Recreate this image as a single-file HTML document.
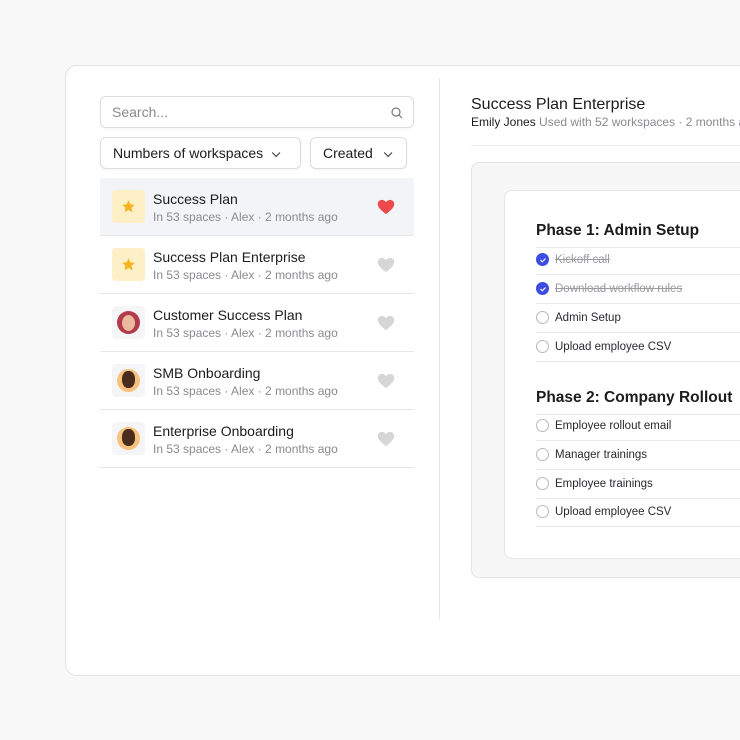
<!DOCTYPE html>
<html><head><style>
*{box-sizing:border-box;margin:0;padding:0}
body{width:740px;height:740px;overflow:hidden;background:#f8f8f9;font-family:"Liberation Sans",sans-serif;color:#1c1c1e;position:relative}
.card{position:absolute;left:65px;top:65px;width:700px;height:611px;background:#fff;border:1px solid #e3e3e6;border-radius:12px}
.abs{position:absolute}
.search{left:100px;top:96px;width:314px;height:32px;border:1px solid #dcdce0;border-radius:6px;font-size:14px;color:#8a8a90;padding:7px 11px;box-shadow:0 1px 2px rgba(0,0,0,.05)}
.dd{top:137px;height:32px;border:1px solid #dcdce0;border-radius:6px;font-size:14px;padding:7px 12px;box-shadow:0 1px 2px rgba(0,0,0,.05)}
.row{left:100px;width:314px;height:58px;border-bottom:1px solid #e6e6e9}
.row .ic{position:absolute;left:12px;top:12px;width:33px;height:33px;border-radius:4px;background:#f5f5f7}
.row .t{position:absolute;left:53px;top:13px;font-size:14px}
.row .s{position:absolute;left:53px;top:32px;font-size:12px;color:#8a8a90}
.row .h{position:absolute;right:19px;top:21px}
.av{position:absolute;left:5px;top:5px;width:23px;height:23px;border-radius:50%}
.item{left:536px;width:220px;height:29px;border-bottom:1px solid #e8e8eb;font-size:11.5px;padding-left:19px;line-height:28px;color:#2a2a2e}
.item .c{position:absolute;left:0;top:7px;width:13px;height:13px;border-radius:50%;border:1px solid #b8b8be}
.item .c.on{background:#3d4de0;border-color:#3d4de0}
.done{color:#9a9aa0;text-decoration:line-through}
.ph{left:536px;font-size:15.5px;font-weight:bold;color:#1c1c1e;width:220px;padding-bottom:7px;border-bottom:1px solid #e8e8eb}
</style></head><body>
<div class="card"></div>
<div class="abs search">Search...<svg class="abs" style="right:10px;top:10px" width="12" height="12" viewBox="0 0 12 12"><circle cx="5" cy="5" r="4" fill="none" stroke="#777" stroke-width="1.2"/><path d="M8 8l3 3" stroke="#777" stroke-width="1.2"/></svg></div>
<div class="abs dd" style="left:100px;width:201px">Numbers of workspaces <span style="display:inline-block;margin-left:4px;width:6px;height:6px;border-right:1.3px solid #333;border-bottom:1.3px solid #333;transform:rotate(45deg) translateY(-3px)"></span></div>
<div class="abs dd" style="left:310px;width:97px">Created <span style="display:inline-block;margin-left:6px;width:6px;height:6px;border-right:1.3px solid #333;border-bottom:1.3px solid #333;transform:rotate(45deg) translateY(-3px)"></span></div>

<div class="abs row" style="top:178px;background:#f3f4f8"><div class="ic" style="background:#fdefc6"><svg style="position:absolute;left:9px;top:9px" width="15" height="15" viewBox="0 0 24 24"><path d="M12 2l3 6.5 7 .8-5.2 4.8 1.5 7L12 17.5 5.7 21l1.5-7L2 9.3l7-.8z" fill="#f6b320"/></svg></div><div class="t">Success Plan</div><div class="s">In 53 spaces · Alex · 2 months ago</div><svg class="h" width="18" height="16" viewBox="0 0 24 21"><path d="M12 20C4 14 1 10 1 6.5 1 3.4 3.4 1 6.5 1 8.6 1 10.8 2.2 12 4 13.2 2.2 15.4 1 17.5 1 20.6 1 23 3.4 23 6.5 23 10 20 14 12 20z" fill="#ec4a4a"/></svg></div>
<div class="abs row" style="top:236px"><div class="ic" style="background:#fdefc6"><svg style="position:absolute;left:9px;top:9px" width="15" height="15" viewBox="0 0 24 24"><path d="M12 2l3 6.5 7 .8-5.2 4.8 1.5 7L12 17.5 5.7 21l1.5-7L2 9.3l7-.8z" fill="#f6b320"/></svg></div><div class="t">Success Plan Enterprise</div><div class="s">In 53 spaces · Alex · 2 months ago</div><svg class="h" width="18" height="16" viewBox="0 0 24 21"><path d="M12 20C4 14 1 10 1 6.5 1 3.4 3.4 1 6.5 1 8.6 1 10.8 2.2 12 4 13.2 2.2 15.4 1 17.5 1 20.6 1 23 3.4 23 6.5 23 10 20 14 12 20z" fill="#d6d6d9"/></svg></div>
<div class="abs row" style="top:294px"><div class="ic"><div class="av" style="background:#b23a4a"><div style="position:absolute;left:5px;top:4px;width:13px;height:16px;border-radius:50%;background:#e9b9a0"></div></div></div><div class="t">Customer Success Plan</div><div class="s">In 53 spaces · Alex · 2 months ago</div><svg class="h" width="18" height="16" viewBox="0 0 24 21"><path d="M12 20C4 14 1 10 1 6.5 1 3.4 3.4 1 6.5 1 8.6 1 10.8 2.2 12 4 13.2 2.2 15.4 1 17.5 1 20.6 1 23 3.4 23 6.5 23 10 20 14 12 20z" fill="#d6d6d9"/></svg></div>
<div class="abs row" style="top:352px"><div class="ic"><div class="av" style="background:#f7c27e"><div style="position:absolute;left:5px;top:2px;width:13px;height:17px;border-radius:45%;background:#4a2c1e"></div></div></div><div class="t">SMB Onboarding</div><div class="s">In 53 spaces · Alex · 2 months ago</div><svg class="h" width="18" height="16" viewBox="0 0 24 21"><path d="M12 20C4 14 1 10 1 6.5 1 3.4 3.4 1 6.5 1 8.6 1 10.8 2.2 12 4 13.2 2.2 15.4 1 17.5 1 20.6 1 23 3.4 23 6.5 23 10 20 14 12 20z" fill="#d6d6d9"/></svg></div>
<div class="abs row" style="top:410px"><div class="ic"><div class="av" style="background:#f7c27e"><div style="position:absolute;left:5px;top:2px;width:13px;height:17px;border-radius:45%;background:#4a2c1e"></div></div></div><div class="t">Enterprise Onboarding</div><div class="s">In 53 spaces · Alex · 2 months ago</div><svg class="h" width="18" height="16" viewBox="0 0 24 21"><path d="M12 20C4 14 1 10 1 6.5 1 3.4 3.4 1 6.5 1 8.6 1 10.8 2.2 12 4 13.2 2.2 15.4 1 17.5 1 20.6 1 23 3.4 23 6.5 23 10 20 14 12 20z" fill="#d6d6d9"/></svg></div>

<div class="abs" style="left:439px;top:78px;width:1px;height:542px;background:#e6e6e9"></div>

<div class="abs" style="left:471px;top:96px;font-size:16px;white-space:nowrap">Success Plan Enterprise</div>
<div class="abs" style="left:471px;top:115px;font-size:12px;white-space:nowrap">Emily Jones <span style="color:#8a8a90">Used with 52 workspaces · 2 months ago</span></div>
<div class="abs" style="left:471px;top:145px;width:280px;height:1px;background:#ececef"></div>
<div class="abs" style="left:471px;top:162px;width:290px;height:416px;background:#f7f7f8;border:1px solid #e3e3e6;border-radius:8px"></div>
<div class="abs" style="left:504px;top:190px;width:260px;height:369px;background:#fff;border:1px solid #e6e6e9;border-radius:8px"></div>

<div class="abs ph" style="top:222px">Phase 1: Admin Setup</div>
<div class="abs item" style="top:246px"><span class="c on"><svg style="position:absolute;left:2px;top:2px" width="8" height="8" viewBox="0 0 8 8"><path d="M1.5 4l1.8 1.8L6.5 2.5" stroke="#fff" stroke-width="1.1" fill="none"/></svg></span><span class="done">Kickoff call</span></div>
<div class="abs item" style="top:275px"><span class="c on"><svg style="position:absolute;left:2px;top:2px" width="8" height="8" viewBox="0 0 8 8"><path d="M1.5 4l1.8 1.8L6.5 2.5" stroke="#fff" stroke-width="1.1" fill="none"/></svg></span><span class="done">Download workflow rules</span></div>
<div class="abs item" style="top:304px"><span class="c"></span>Admin Setup</div>
<div class="abs item" style="top:333px"><span class="c"></span>Upload employee CSV</div>

<div class="abs ph" style="top:389px">Phase 2: Company Rollout</div>
<div class="abs item" style="top:412px"><span class="c"></span>Employee rollout email</div>
<div class="abs item" style="top:441px"><span class="c"></span>Manager trainings</div>
<div class="abs item" style="top:470px"><span class="c"></span>Employee trainings</div>
<div class="abs item" style="top:498px"><span class="c"></span>Upload employee CSV</div>
</body></html>
